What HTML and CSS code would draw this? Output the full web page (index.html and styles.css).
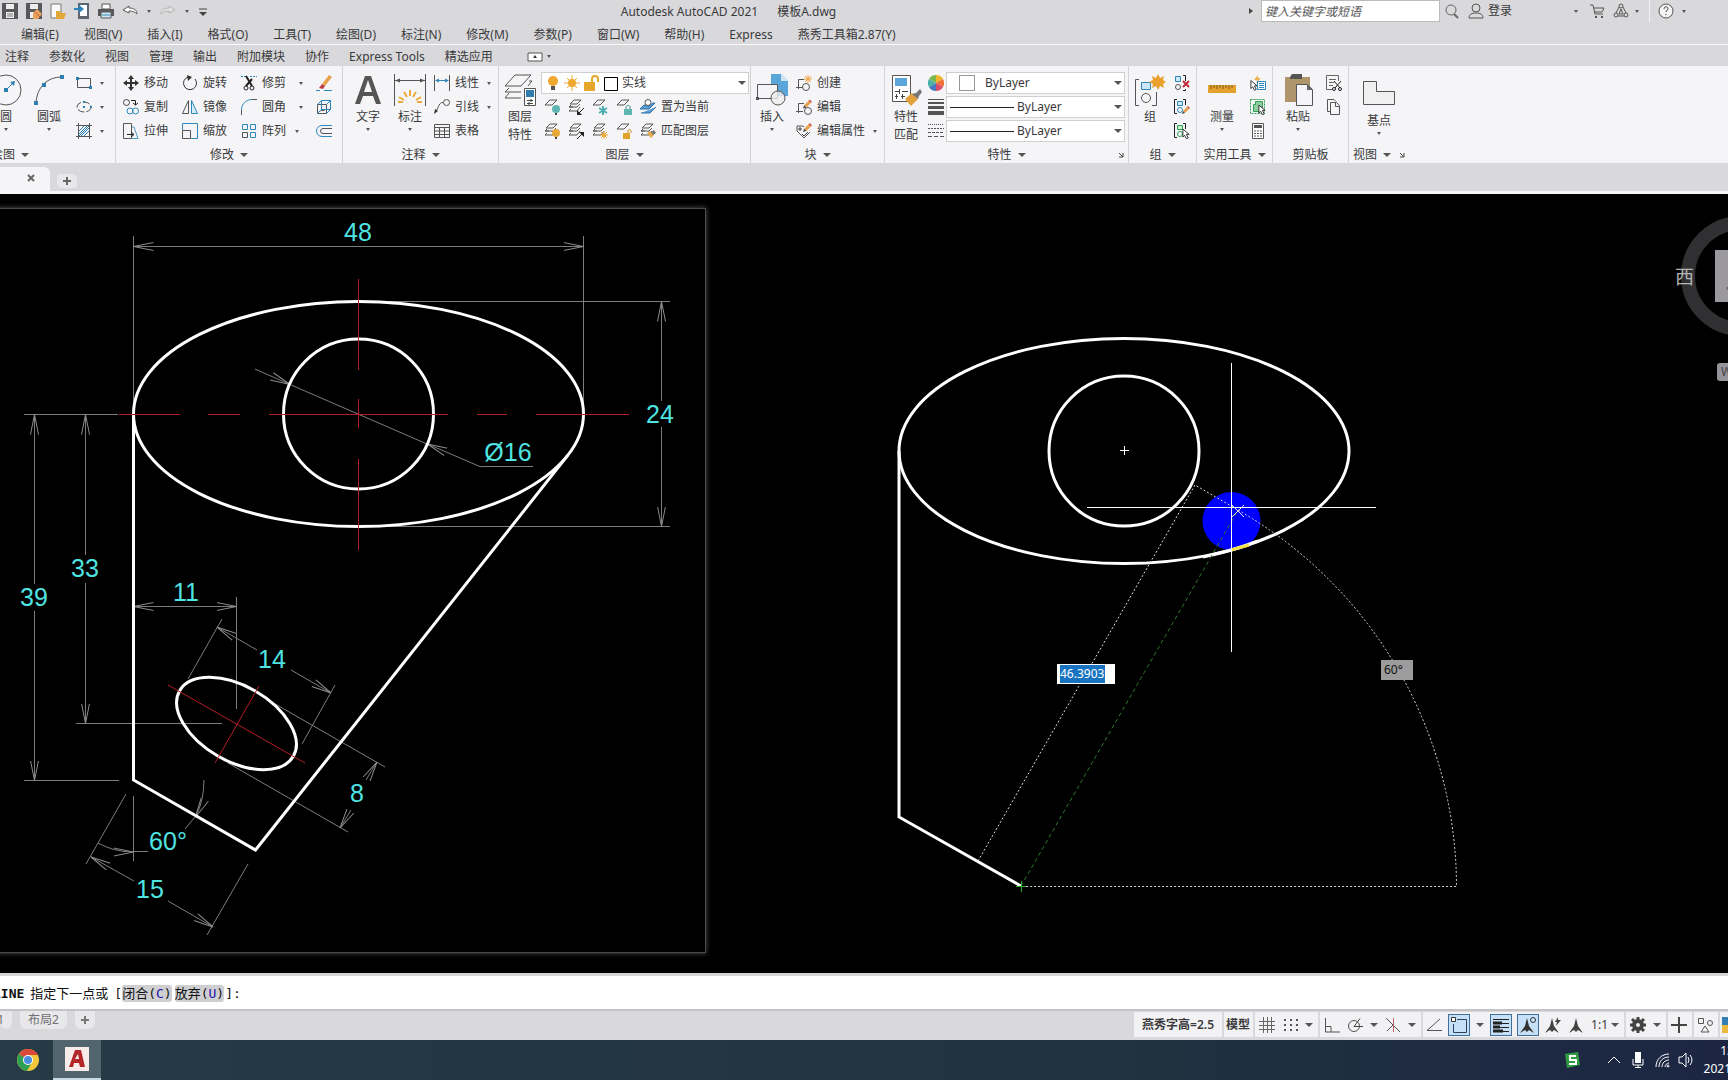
FILE: index.html
```html
<!DOCTYPE html>
<html lang="zh-CN">
<head>
<meta charset="utf-8">
<title>Autodesk AutoCAD 2021 模板A.dwg</title>
<link rel="stylesheet" href="styles.css">
</head>
<body>
<svg class="sprite" aria-hidden="true">
  <symbol id="layer1" viewBox="0 0 16 16"><path d="M1 6L6 1h7L8 6z" fill="none" stroke="#555"/></symbol>
  <symbol id="layers" viewBox="0 0 16 16"><path d="M2 5L6 1h7L9 5zM5 8H1l2-2M1 8h8l3-3M3 10l-2 2h8l3-4" fill="none" stroke="#555"/></symbol>
  <symbol id="pencil" viewBox="0 0 8 8"><path d="M1 5l4-4 2 2-4 4z" fill="#e9a04b"/><path d="M5 1l1-1 2 2-1 1z" fill="#c8553d"/><path d="M1 5L0 8l3-1z" fill="#444"/></symbol>
  <symbol id="cursor" viewBox="0 0 9 12"><path d="M1 1v9l2-2 2 4 2-1-2-4h3z" fill="#fff" stroke="#222"/></symbol>
</svg>

<header class="titlebar">
  <div class="qat">
    <button aria-label="保存"><svg viewBox="0 0 16 16"><path d="M0 0h16v16H0z" fill="#58585a"/><path d="M4 1h8v5H4zM4 9h8v6H4z" fill="#eee"/><path d="M5 11h6M5 13h6" stroke="#777"/></svg></button>
    <button aria-label="另存为"><svg viewBox="0 0 16 16"><path d="M0 0h16v16H0z" fill="#58585a"/><path d="M4 1h8v5H4zM4 9h8v6H4z" fill="#eee"/><path d="M7 10l4-4 5 5-4 5H7z" fill="#e7a35c"/><path d="M9 9l5 5" stroke="#c65b3a"/></svg></button>
    <button aria-label="打开"><svg viewBox="0 0 16 16"><path d="M1 1h10v14H1z" fill="#fafafa" stroke="#777"/><path d="M6 8h4l1 2h5l-2 6H6z" fill="#e3a83a"/></svg></button>
    <button aria-label="从移动设备打开"><svg viewBox="0 0 16 16"><path d="M4 0h11v16H4z" fill="#5b6670"/><path d="M6 2h7v11H6z" fill="#fff"/><path d="M0 5h5V2l5 4-5 4V7H0z" fill="#2e84bd"/></svg></button>
    <button aria-label="打印"><svg viewBox="0 0 16 16"><path d="M4 1h8v5H4z" fill="#fff" stroke="#555"/><path d="M0 6h16v7H0z" fill="#58585a"/><path d="M3 9h10v6H3z" fill="#cfe6f3" stroke="#58585a"/><path d="M4 12h8" stroke="#3a87b5"/></svg></button>
    <button aria-label="放弃"><svg viewBox="0 0 16 16"><path d="M1 7l6-4v2c5 0 8 2 8 6-2-2-4-3-8-3v2z" fill="#fff" stroke="#555"/></svg></button>
    <i class="caret"></i>
    <button aria-label="重做"><svg viewBox="0 0 16 16"><path d="M15 7L9 3v2c-5 0-8 2-8 6 2-2 4-3 8-3v2z" fill="#e4e4e4" stroke="#b4b4b4"/></svg></button>
    <i class="caret"></i>
    <button class="slim" aria-label="自定义"><svg viewBox="0 0 10 16"><path d="M1 6h8" stroke="#444"/><path d="M1 9h8l-4 4z" fill="#444"/></svg></button>
  </div>
  <div class="apptitle"><span>Autodesk AutoCAD 2021</span><span>模板A.dwg</span></div>
  <div class="infocenter">
    <i class="caret right"></i>
    <input class="search" type="text" placeholder="键入关键字或短语" aria-label="搜索">
    <button aria-label="搜索"><svg viewBox="0 0 16 16"><circle cx="7" cy="7" r="5" fill="none" stroke="#666"/><path d="M10 11l4 4" stroke="#666" stroke-width="2"/></svg></button>
    <button class="login"><svg viewBox="0 0 16 16"><circle cx="8" cy="5" r="4" fill="none" stroke="#555"/><path d="M1 15c0-4 3-5 7-5s7 1 7 5z" fill="none" stroke="#555"/></svg>登录</button>
    <i class="caret wide"></i>
    <button aria-label="应用商店"><svg viewBox="0 0 16 16"><path d="M1 2h3l2 9h8M5 5h10l-2 4H5" fill="none" stroke="#555"/><path d="M6 14h2M12 14h2" stroke="#555" stroke-width="2"/></svg></button>
    <button aria-label="Autodesk"><svg viewBox="0 0 16 16" fill="none" stroke="#555"><circle cx="8" cy="3" r="2"/><circle cx="3" cy="12" r="2"/><circle cx="13" cy="12" r="2"/><path d="M6 4L3 10M10 4l3 6M5 13h6M8 6l-2 5h4z"/></svg></button>
    <i class="caret near"></i>
    <span class="vsep"></span>
    <button aria-label="帮助"><svg viewBox="0 0 16 16"><circle cx="8" cy="8" r="7" fill="#f4f4f4" stroke="#555"/><path d="M6 6c0-3 4-3 4 0 0 1-2 1-2 3M8 11v1" fill="none" stroke="#444"/></svg></button>
    <i class="caret"></i>
  </div>
</header>

<nav class="menubar">
  <a href="#">编辑(E)</a><a href="#">视图(V)</a><a href="#">插入(I)</a><a href="#">格式(O)</a><a href="#">工具(T)</a><a href="#">绘图(D)</a><a href="#">标注(N)</a><a href="#">修改(M)</a><a href="#">参数(P)</a><a href="#">窗口(W)</a><a href="#">帮助(H)</a><a href="#">Express</a><a href="#">燕秀工具箱2.87(Y)</a>
</nav>
<nav class="tabs">
  <a href="#">注释</a><a href="#">参数化</a><a href="#">视图</a><a href="#">管理</a><a href="#">输出</a><a href="#">附加模块</a><a href="#">协作</a><a href="#">Express Tools</a><a href="#">精选应用</a>
  <button class="minimize" aria-label="最小化功能区"><svg viewBox="0 0 16 10"><path d="M1 1h14v8H1z" fill="#fff" stroke="#555"/><path d="M6 6h4L8 3z" fill="#333"/></svg><i class="caret"></i></button>
</nav>

<main class="ribbon">
  <section class="panel draw">
    <div class="body">
      <button class="big"><svg viewBox="0 0 32 32"><circle cx="16" cy="16" r="15" fill="none" stroke="#555"/><path d="M16 16l7-7" stroke="#2e7fb0"/><path d="M25 7l-1 5-4-4zM14 14h4v4h-4z" fill="#2e7fb0"/></svg>圆<i class="caret"></i></button>
      <button class="big"><svg viewBox="0 0 32 32"><path d="M3 29C4 14 13 3 29 3" fill="none" stroke="#555"/><path d="M1 27h4v4H1zM9 9h4v4H9zM27 1h4v4h-4z" fill="#2e7fb0"/></svg>圆弧<i class="caret"></i></button>
      <div class="stack">
        <button class="sm" aria-label="矩形"><svg viewBox="0 0 16 16"><path d="M1.500 3.500h13v9h-13z" fill="none" stroke="#555"/><path d="M0 2h3v3H0zM13 11h3v3h-3z" fill="#2e7fb0"/></svg><i class="caret"></i></button>
        <button class="sm" aria-label="椭圆"><svg viewBox="0 0 16 16"><ellipse cx="8" cy="8" rx="7" ry="5" fill="none" stroke="#555" stroke-dasharray="7 2"/><path d="M7 7h2v2H7zM7 2h2v2H7zM14 7h2v2h-2z" fill="#2e7fb0"/></svg><i class="caret"></i></button>
        <button class="sm" aria-label="图案填充"><svg viewBox="0 0 16 16"><path d="M2.500 0v16M13.500 0v16M0 2.500h16M0 13.500h16" stroke="#555"/><path d="M3 8l5-5M3 13L13 3M8 13l5-5M3 11l8-8M5 13l8-8" stroke="#2e7fb0"/></svg><i class="caret"></i></button>
      </div>
    </div>
    <button class="ptitle">绘图<i class="caret l"></i></button>
  </section>

  <section class="panel modify">
    <div class="body">
      <div class="stack c59">
        <button class="sm"><svg viewBox="0 0 16 16"><path d="M8 2v12M2 8h12" stroke="#333" stroke-width="2"/><path d="M8 0l3 4H5zM8 16l3-4H5zM0 8l4-3v6zM16 8l-4-3v6z" fill="#333"/></svg>移动</button>
        <button class="sm"><svg viewBox="0 0 16 16" fill="none"><circle cx="3.500" cy="3.500" r="3" stroke="#444"/><path d="M8 1.500h4.500V6M10 4l2.500 2L15 4" stroke="#222"/><circle cx="7" cy="12" r="3" stroke="#2e88bd"/><circle cx="12.500" cy="12" r="3" stroke="#2e88bd"/></svg>复制</button>
        <button class="sm"><svg viewBox="0 0 16 16" fill="none"><path d="M.5.500h8v15h-8z" stroke="#555"/><path d="M9 4h2l4 11.500H8" stroke="#4a9cc9"/><path d="M4 11.500h6M8 9l3 2.500L8 14" stroke="#222"/></svg>拉伸</button>
      </div>
      <div class="stack c59">
        <button class="sm"><svg viewBox="0 0 16 16"><path d="M13 4A6.500 6.500 0 1 1 6 2" fill="none" stroke="#333"/><path d="M5 0l5 2-4 4z" fill="#333"/></svg>旋转</button>
        <button class="sm"><svg viewBox="0 0 16 16"><path d="M6.500 1.500v13h-6z" fill="none" stroke="#555"/><path d="M9.500 1.500v13h6z" fill="#d7ebf6" stroke="#2e88bd"/></svg>镜像</button>
        <button class="sm"><svg viewBox="0 0 16 16" fill="none"><path d="M.5 7V.500h15v15H9" stroke="#2e88bd"/><path d="M.5 7.500h8v8h-8z" stroke="#555"/></svg>缩放</button>
      </div>
      <div class="stack c75">
        <button class="sm trim"><svg viewBox="0 0 16 16" fill="none"><path d="M0 1.500h5M9 1.500h7" stroke="#2e88bd" stroke-dasharray="2 1"/><path d="M5 1l6 10M11 4l-6 7" stroke="#222" stroke-width="2"/><circle cx="5" cy="13" r="2" stroke="#222"/><circle cx="11" cy="13" r="2" stroke="#222"/></svg>修剪<i class="caret"></i></button>
        <button class="sm trim"><svg viewBox="0 0 16 16" fill="none"><path d="M.5 16v-5M11 .500h5" stroke="#555"/><path d="M.5 11C.5 5 5 .500 11 .500" stroke="#2e88bd"/></svg>圆角<i class="caret"></i></button>
        <button class="sm"><svg viewBox="0 0 16 16" fill="none" stroke="#2e88bd"><path d="M1.500 1.500h5v5h-5zM9.500 1.500h5v5h-5zM9.500 9.500h5v5h-5z"/><path d="M1.500 9.500h5v5h-5z" stroke="#555"/></svg>阵列<i class="caret"></i></button>
      </div>
      <div class="stack">
        <button class="sm" aria-label="删除"><svg viewBox="0 0 16 16"><path d="M6 9l7-9 3 2-7 9z" fill="#e8a34a"/><path d="M6 9l3 2-2 3-4-1z" fill="#bd3e48"/><path d="M0 15.500h4M8 15.500h8" stroke="#2e88bd"/></svg></button>
        <button class="sm" aria-label="分解"><svg viewBox="0 0 16 16" fill="none"><path d="M1.500 5.500h9v9h-9zM5.500 8.500v3h3" stroke="#555"/><path d="M1.500 5.500l4-4h9l-4 4M14.500 1.500v9l-4 4M5.500 2v9l-4 3M5.500 10.500h9" stroke="#2e88bd"/></svg></button>
        <button class="sm" aria-label="偏移"><svg viewBox="0 0 16 16" fill="none"><path d="M16 2.500H6a5 5 0 0 0 0 11h10" stroke="#2e88bd"/><path d="M16 5.500H7a2 2 0 0 0 0 5h9" stroke="#555"/></svg></button>
      </div>
    </div>
    <button class="ptitle">修改<i class="caret l"></i></button>
  </section>

  <section class="panel annotate">
    <div class="body">
      <button class="big"><svg viewBox="0 0 32 32"><path d="M3 30L13 2h6l10 28h-5l-3-8H11l-3 8zM12 18h8L16 6z" fill="#555" fill-rule="evenodd"/></svg>文字<i class="caret"></i></button>
      <button class="big"><svg viewBox="0 0 32 32"><path d="M.5 0v32M31.500 0v32M1 6.500h30" stroke="#555"/><path d="M1 6.500l5-2v4zM31 6.500l-5-2v4z" fill="#555"/><path d="M16 16v6M10 18l3 5M22 18l-3 5M5 23l5 3M27 23l-5 3M4 28h5M23 28h5" stroke="#e9ac3c" stroke-width="2"/></svg>标注<i class="caret"></i></button>
      <div class="stack">
        <button class="sm"><svg viewBox="0 0 16 16"><path d="M.5 0v16M15.500 0v16" stroke="#555"/><path d="M2 5.500h12" stroke="#2e88bd"/><path d="M1 5.500l4-2v4zM15 5.500l-4-2v4z" fill="#2e88bd"/></svg>线性<i class="caret"></i></button>
        <button class="sm"><svg viewBox="0 0 16 16"><circle cx="12.500" cy="3.500" r="3" fill="none" stroke="#555"/><path d="M9 3.500c-4 0-4 4-7 9" fill="none" stroke="#555"/><path d="M0 15l1-5 3 2z" fill="#333"/></svg>引线<i class="caret"></i></button>
        <button class="sm"><svg viewBox="0 0 16 16" fill="none" stroke="#555"><path d="M.5 1.500h15v13H.5zM0 4.500h16M0 8h16M0 11.500h16M5.500 5v10M10.500 5v10"/></svg>表格</button>
      </div>
    </div>
    <button class="ptitle">注释<i class="caret l"></i></button>
  </section>

  <section class="panel layer">
    <div class="body">
      <button class="big"><svg viewBox="0 0 32 32"><path d="M1 12L11 1h16L17 12zM5 14l-4 4h16M25 7h3l-4 5M1 24h16M5 19l-4 5" fill="none" stroke="#555"/><path d="M20.500 14.500h11v17h-11z" fill="#fff" stroke="#555"/><path d="M22 16h8v7h-8z" fill="#2e7fb0"/><path d="M23 26.500h6M23 29.500h6M27 25v3M25 28v3" stroke="#444"/></svg>图层<br>特性</button>
      <div class="rows">
        <div class="combo">
          <svg viewBox="0 0 16 16"><circle cx="8" cy="6" r="5" fill="#f0a830"/><path d="M6 11h4v4H6z" fill="#555"/></svg>
          <svg viewBox="0 0 16 16"><circle cx="8" cy="8" r="4" fill="#f0a830"/><path d="M8 0v16M0 8h16M3 3l10 10M13 3L3 13" stroke="#f0a830"/></svg>
          <svg viewBox="0 0 16 16"><path d="M1 7h11v9H1z" fill="#e5a82c"/><path d="M9 7V4c0-4 6-4 6 0v3" fill="none" stroke="#e5a82c" stroke-width="2"/></svg>
          <svg viewBox="0 0 16 16"><path d="M2.500 2.500h13v13h-13z" fill="#fff" stroke="#000"/></svg>
          <select aria-label="图层"><option>实线</option></select><i class="caret l"></i>
        </div>
        <div class="irow">
          <button class="sm" aria-label="关"><svg viewBox="0 0 16 16"><use href="#layer1" width="16" height="16"/><circle cx="12" cy="10" r="4" fill="#5fb5b2"/><path d="M11 14h2v2h-2z" fill="#444"/></svg></button>
          <button class="sm" aria-label="隔离"><svg viewBox="0 0 16 16"><use href="#layers" width="16" height="16"/><path d="M16 9l-5 5" stroke="#222"/><path d="M9 16v-5l5 5z" fill="#222"/></svg></button>
          <button class="sm" aria-label="冻结"><svg viewBox="0 0 16 16"><use href="#layer1" width="16" height="16"/><path d="M11 7v9M7 9l8 5M15 9l-8 5" stroke="#4caeb0" stroke-width="2"/></svg></button>
          <button class="sm" aria-label="锁定"><svg viewBox="0 0 16 16"><use href="#layer1" width="16" height="16"/><path d="M8 10h8v6H8z" fill="#5fb5b2"/><path d="M10 10V8c0-2 4-2 4 0v2" fill="none" stroke="#3b8f8d"/></svg></button>
          <button class="sm"><svg viewBox="0 0 16 16"><path d="M4 6L0 10h9l6-6h-2l-4 3zM1 14h9l6-6" fill="#5b9fd4" stroke="#2e6fa8"/><circle cx="8" cy="3.500" r="3" fill="#fff" stroke="#555"/></svg>置为当前</button>
        </div>
        <div class="irow">
          <button class="sm" aria-label="打开所有图层"><svg viewBox="0 0 16 16"><use href="#layers" width="16" height="16"/><circle cx="12" cy="10" r="4" fill="#e9a93a"/><path d="M11 14h2v2h-2z" fill="#444"/></svg></button>
          <button class="sm" aria-label="取消隔离"><svg viewBox="0 0 16 16"><use href="#layers" width="16" height="16"/><path d="M9 16l5-5" stroke="#222"/><path d="M16 9v5l-5-5z" fill="#222"/></svg></button>
          <button class="sm" aria-label="解冻所有图层"><svg viewBox="0 0 16 16"><use href="#layers" width="16" height="16"/><circle cx="12" cy="12" r="2" fill="#e9a93a"/><path d="M12 8v8M8 12h8M9 9l6 6M15 9l-6 6" stroke="#e9a93a"/></svg></button>
          <button class="sm" aria-label="解锁"><svg viewBox="0 0 16 16"><use href="#layer1" width="16" height="16"/><path d="M7 10h7v6H7z" fill="#e0a02c"/><path d="M12 10V8c0-2 3-2 3 0v2" fill="none" stroke="#c98d20"/></svg></button>
          <button class="sm"><svg viewBox="0 0 16 16"><use href="#layers" width="16" height="16"/><path d="M7 10l4 5 3-3-4-4z" fill="#e4a94c"/><path d="M11 9l3-2 2 3-3 2z" fill="#777"/></svg>匹配图层</button>
        </div>
      </div>
    </div>
    <button class="ptitle">图层<i class="caret l"></i></button>
  </section>

  <section class="panel block">
    <div class="body">
      <button class="big"><svg viewBox="0 0 32 32"><path d="M15 0h10l7 7v15H15z" fill="#5aa6d8"/><path d="M25 0v7h7z" fill="#cfe6f5"/><path d="M1.500 10.500h20v14h-20z" fill="#f5f5f7" stroke="#555"/><circle cx="22" cy="24" r="7" fill="#eee" fill-opacity=".8" stroke="#555"/><path d="M0 23h3v3H0z" fill="#555"/></svg>插入<i class="caret"></i></button>
      <div class="stack">
        <button class="sm"><svg viewBox="0 0 16 16"><path d="M2.500 14V4.500H8M0 12.500h7" fill="none" stroke="#555"/><circle cx="10" cy="12" r="3.500" fill="none" stroke="#555"/><path d="M12 0v8M8 4h8M9 1l6 6M15 1L9 7" stroke="#e9a23a"/></svg>创建</button>
        <button class="sm"><svg viewBox="0 0 16 16"><path d="M2.500 14V4.500H8M0 12.500h7" fill="none" stroke="#555"/><circle cx="12" cy="12" r="3.500" fill="none" stroke="#555"/><use href="#pencil" x="7" y="0" width="9" height="10"/></svg>编辑</button>
        <button class="sm"><svg viewBox="0 0 16 16"><path d="M1 3h6l1 1M1 3v5l7 7 6-6" fill="none" stroke="#555"/><path d="M3 5h2v2H3zM6 11l2 2 4-4" fill="none" stroke="#444"/><use href="#pencil" x="7" y="0" width="9" height="9"/></svg>编辑属性<i class="caret"></i></button>
      </div>
    </div>
    <button class="ptitle">块<i class="caret l"></i></button>
  </section>

  <section class="panel props">
    <div class="body">
      <button class="big"><svg viewBox="0 0 32 32"><path d="M2.500 1.500h18v26h-18z" fill="#fff" stroke="#555"/><path d="M5 4h12v8H5z" fill="#5aa6d8"/><path d="M5 17.500h4M12 17.500h6M9.500 15v5M5 22.500h3M11 22.500h4M12.500 20v5M6.500 20v5" stroke="#444"/><path d="M15 25l7-6 6 6-7 7z" fill="#e3a13b"/><path d="M22 20l4-1 4-4 2 3-3 4-1 3z" fill="#777"/></svg>特性<br>匹配</button>
      <div class="rows">
        <div class="prow"><svg class="ic" viewBox="0 0 16 16"><path d="M8 8V0a8 8 0 0 1 7 4z" fill="#f0b32c"/><path d="M8 8l7-4a8 8 0 0 1 0 8z" fill="#ef7037"/><path d="M8 8l7 4a8 8 0 0 1-7 4z" fill="#d94b6a"/><path d="M8 8v8a8 8 0 0 1-7-4z" fill="#4579c0"/><path d="M8 8l-7 4a8 8 0 0 1 0-8z" fill="#4ab2a8"/><path d="M8 8L1 4a8 8 0 0 1 7-4z" fill="#79b94f"/></svg>
          <div class="combo color"><span class="swatch"></span><select aria-label="颜色"><option>ByLayer</option></select><i class="caret l"></i></div></div>
        <div class="prow"><svg class="ic" viewBox="0 0 16 16"><path d="M0 .500h16" stroke="#555"/><path d="M0 4h16" stroke="#555" stroke-width="2"/><path d="M0 8.500h16" stroke="#555" stroke-width="3"/><path d="M0 14h16" stroke="#555" stroke-width="4"/></svg>
          <div class="combo"><span class="line"></span><select aria-label="线宽"><option>ByLayer</option></select><i class="caret l"></i></div></div>
        <div class="prow"><svg class="ic" viewBox="0 0 16 16" stroke="#555"><path d="M0 1.500h16" stroke-dasharray="1 1"/><path d="M0 5.500h16" stroke-dasharray="2 1"/><path d="M0 9.500h16" stroke-dasharray="3 1"/><path d="M0 13.500h16" stroke-dasharray="4 2"/></svg>
          <div class="combo"><span class="line"></span><select aria-label="线型"><option>ByLayer</option></select><i class="caret l"></i></div></div>
      </div>
    </div>
    <button class="ptitle">特性<i class="caret l"></i></button>
    <button class="launcher" aria-label="特性设置"><svg viewBox="0 0 6 6"><path d="M1 1l4 4M5 1v4H1" fill="none" stroke="#444"/></svg></button>
  </section>

  <section class="panel group">
    <div class="body">
      <button class="big"><svg viewBox="0 0 32 32"><path d="M5 5.500H1.500v26H5M18 31.500h4.500V18" fill="none" stroke="#555"/><path d="M7.500 8.500h9v7h-9z" fill="#cfe6f5" stroke="#2e88bd"/><circle cx="12" cy="24" r="4.500" fill="none" stroke="#555"/><path d="M24 0l2 4 4-2-1 4 3 2-3 2 1 4-4-2-2 4-2-4-4 2 1-4-4-2 4-2-1-4 4 2z" fill="#e9a02c"/></svg>组</button>
      <div class="stack">
        <button class="sm" aria-label="解除编组"><svg viewBox="0 0 16 16"><path d="M1.500 1.500h5v5h-5z" fill="#cfe6f5" stroke="#2e88bd"/><circle cx="4" cy="12" r="2.500" fill="none" stroke="#555"/><path d="M9 .500h2.500V6M9 15.500h2.500V14" fill="none" stroke="#222"/><path d="M9 6l6 6M15 6l-6 6" stroke="#c0283a" stroke-width="2"/></svg></button>
        <button class="sm" aria-label="组编辑"><svg viewBox="0 0 16 16"><path d="M3 .500H.5v14H3M9 .500h2.500V6" fill="none" stroke="#222"/><path d="M3.500 2.500h5v4h-5z" fill="#cfe6f5" stroke="#2e88bd"/><circle cx="6" cy="11" r="2.500" fill="none" stroke="#2e88bd"/><use href="#pencil" x="8" y="7" width="8" height="8"/></svg></button>
        <button class="sm" aria-label="组选择"><svg viewBox="0 0 16 16"><path d="M3 .500H.5v14H3M9 .500h2.500V6" fill="none" stroke="#222"/><path d="M3.500 2.500h5v4h-5z" fill="#c9ecd1" stroke="#2f9e4f"/><circle cx="6" cy="11" r="2.500" fill="none" stroke="#2f9e4f"/><use href="#cursor" x="8" y="5" width="8" height="11"/></svg></button>
      </div>
    </div>
    <button class="ptitle">组<i class="caret l"></i></button>
  </section>

  <section class="panel utils">
    <div class="body">
      <button class="big"><svg viewBox="0 0 32 32"><path d="M2 11h28v8H2z" fill="#e3a22c"/><path d="M5 11v4M8 11v3M11 11v4M14 11v3M17 11v4M20 11v3M23 11v4M26 11v3" stroke="#7a5a1c"/></svg>测量<i class="caret"></i></button>
      <div class="stack">
        <button class="sm" aria-label="快速选择"><svg viewBox="0 0 16 16"><use href="#cursor" x="0" y="4" width="8" height="12"/><path d="M8 0L4 5h3L6 8l5-5H8z" fill="#eeb24a"/><path d="M7.500 6.500h8v8h-8z" fill="#fff" stroke="#2e88bd"/><path d="M9 8.500h5M9 10.500h5M9 12.500h5" stroke="#2e88bd"/></svg></button>
        <button class="sm" aria-label="全部选择"><svg viewBox="0 0 16 16"><path d="M.5.500h14v14H.5z" fill="none" stroke="#2f9e4f" stroke-dasharray="2 1"/><path d="M5.500 2.500h7v7h-3v3h-6v-7h2z" fill="#8fd0a0" stroke="#2f9e4f"/><use href="#cursor" x="8" y="5" width="8" height="11"/></svg></button>
        <button class="sm" aria-label="计算器"><svg viewBox="0 0 16 16"><path d="M2.500.500h11v15h-11z" fill="#fff" stroke="#555"/><path d="M4 2h8v3H4z" fill="#555"/><path d="M4 8h8M4 10.500h8M4 13h8" stroke="#555" stroke-dasharray="2 1" stroke-width="1"/></svg></button>
      </div>
    </div>
    <button class="ptitle">实用工具<i class="caret l"></i></button>
  </section>

  <section class="panel clip">
    <div class="body">
      <button class="big"><svg viewBox="0 0 32 32"><path d="M3 3h25v25H3z" fill="#b0946c"/><path d="M10 0h10v5H8V3z" fill="#555"/><path d="M14.500 10.500h11l5 5v16h-16z" fill="#f5f5f7" stroke="#555"/><path d="M25 10v6h6z" fill="#666"/></svg>粘贴<i class="caret"></i></button>
      <div class="stack">
        <button class="sm" aria-label="剪切"><svg viewBox="0 0 16 16" fill="none"><path d="M12.500 6V.500H.5v14H7M3 4.500h7M3 7.500h5M3 10.500h4" stroke="#666"/><path d="M8 6l6 7M15 6l-6 7" stroke="#222"/><circle cx="8" cy="14" r="1.500" stroke="#222"/><circle cx="14" cy="14" r="1.500" stroke="#222"/></svg></button>
        <button class="sm" aria-label="复制剪裁"><svg viewBox="0 0 16 16" fill="none" stroke="#555"><path d="M4 12.500H1.500V.500H8l2 2M4.500 3.500h6l3 3v9h-9zM9.500 4v3.500H13"/></svg></button>
      </div>
    </div>
    <button class="ptitle">剪贴板</button>
  </section>

  <section class="panel view">
    <div class="body">
      <button class="big"><svg viewBox="0 0 32 32"><path d="M.5 3.500h13v10h18v13H.5z" fill="#f0f0f0" stroke="#555"/></svg>基点<i class="caret"></i></button>
    </div>
    <button class="ptitle">视图<i class="caret l"></i></button>
    <button class="launcher" aria-label="视图设置"><svg viewBox="0 0 6 6"><path d="M1 1l4 4M5 1v4H1" fill="none" stroke="#444"/></svg></button>
  </section>
</main>

<div class="doctabs">
  <div class="doctab"><button aria-label="关闭"><svg viewBox="0 0 8 8"><path d="M1 1l6 6M7 1L1 7" stroke="#666" stroke-width="2"/></svg></button></div>
  <button class="newtab" aria-label="新图形"><svg viewBox="0 0 8 8"><path d="M4 0v8M0 4h8" stroke="#666" stroke-width="2"/></svg></button>
</div>

<div class="canvas">
  <div class="sheet"></div>
  <svg class="drawing" aria-label="图形">
    <defs>
      <marker id="arr" markerUnits="userSpaceOnUse" markerWidth="22" markerHeight="10" refX="20" refY="5" orient="auto-start-reverse"><path d="M20 5L0 1M20 5L0 9" fill="none" stroke="#8c8c8c"/></marker>
    </defs>
    <g transform="translate(0 -195)" fill="none">
      <g stroke="#7d7d7d">
        <path d="M133.500 237V415M583.500 237V415M373 302.500H670M373 527.500H670M24 415.500H118M24 781.500H119M76 724.500H222M236.500 598V710M133.500 598V620M133.500 797V862"/>
        <path d="M222 620L188 680M335 686L302 745M263 698L385 768M228 764L348 833M126 795L86 865M248 865L207 936"/>
        <g marker-start="url(#arr)" marker-end="url(#arr)">
          <path d="M133.500 247.500H583.500"/><path d="M133.500 607.500H236.500"/>
        </g>
        <g marker-start="url(#arr)">
          <path d="M661.500 302.500V402"/><path d="M661.500 527.500V428"/><path d="M34.500 415.500V585"/><path d="M34.500 781.500V612"/><path d="M85.500 415.500V556"/><path d="M85.500 724.500V584"/>
          <path d="M217 628L257 651"/><path d="M331 694L291 671"/><path d="M377 763L366 781"/><path d="M340 829L351 811"/><path d="M91 858L134 882"/><path d="M213 928L168 902"/>
          <path d="M427.500 445L481 468"/><path d="M133.500 853Q114 853 98 844"/><path d="M195.500 818Q204 802 204 781"/>
        </g>
        <path d="M255 370L290 385.500" marker-end="url(#arr)"/>
        <path d="M290 385.500L427 445M481 467.500H533M195 818L185 830M133 852.500H148"/>
      </g>
      <g stroke="#fff" stroke-width="3">
        <ellipse cx="358.500" cy="415" rx="225" ry="112.500"/><circle cx="358.500" cy="415" r="75"/>
        <path d="M133.500 415V781L255.500 851L567.700 456.400"/>
        <ellipse cx="236.500" cy="724.500" rx="65.600" ry="37.500" transform="rotate(30 236.500 724.500)"/>
      </g>
      <path d="M119 415.500H180M208 415.500H240M269 415.500H448M477 415.500H507M536 415.500H629M358.500 280V371M358.500 400V429M358.500 460V551M168 686L305 764M259 687L215 764" stroke="#b41e23"/>
      <g fill="#4fe3e1" class="dims">
        <text x="358" y="242">48</text><text x="660" y="424">24</text><text x="508" y="462">Ø16</text><text x="34" y="607">39</text><text x="85" y="578">33</text><text x="186" y="602">11</text><text x="272" y="669">14</text><text x="357" y="803">8</text><text x="168" y="851">60°</text><text x="150" y="899">15</text>
      </g>
    </g>
    <g transform="translate(0 -194)" fill="none">
      <g stroke="#fff" stroke-width="3">
        <ellipse cx="1124" cy="451" rx="225" ry="112.500"/><circle cx="1124" cy="451" r="75"/>
        <path d="M899 451V817L1021 886"/>
      </g>
      <circle cx="1231.500" cy="521" r="29" fill="#00f"/>
      <path d="M1203 557Q1232 551 1258 541" stroke="#fff" stroke-width="3"/>
      <path d="M1231 550L1249 545" stroke="#f3e34a" stroke-width="3"/>
      <path d="M1021 886L1238 510" stroke="#2c7a2c" stroke-dasharray="4 3"/>
      <path d="M978 861L1195 485L1238 510A435 435 0 0 1 1456.500 886.500H1021" stroke="#d8d8d8" stroke-dasharray="2 2"/>
      <path d="M1016 886.500h10M1021.500 881v11" stroke="#2fa52f"/>
      <path d="M1087 507.500H1376M1231.500 363V652M1120 450.500h9M1124.500 446v9" stroke="#fff"/>
      <path d="M1232 505l12 12M1244 505l-12 12" stroke="#ddd"/>
    </g>
  </svg>
  <label class="dyn length"><input type="text" value="46.3903" aria-label="长度"></label>
  <span class="dyn angle">60°</span>
  <div class="viewcube"><span class="ring"></span><span class="west">西</span><span class="face">上</span><button class="wcs">WCS</button></div>
</div>

<div class="command"><b>LINE</b><span>指定下一点或</span><span class="opts">[<button>闭合(<em>C</em>)</button><button>放弃(<em>U</em>)</button>]:</span></div>

<div class="statusbar">
  <div class="layouts"><button class="first">1</button><button>布局2</button><button class="add" aria-label="新布局"><svg viewBox="0 0 8 8"><path d="M4 0v8M0 4h8" stroke="#777" stroke-width="2"/></svg></button></div>
  <div class="status">
    <button class="cell txt height">燕秀字高=2.5</button>
    <button class="cell txt model">模型</button>
    <div class="cell">
      <button aria-label="栅格"><svg viewBox="0 0 16 16"><path d="M4.500 0v16M8.500 0v16M12.500 0v16M0 4.500h16M0 8.500h16M0 12.500h16" stroke="#666"/></svg></button>
      <button aria-label="捕捉"><svg viewBox="0 0 16 16"><path d="M2 3h14M2 8h14M2 13h14" stroke="#555" stroke-width="2" stroke-dasharray="2 4"/></svg></button><i class="caret l"></i>
    </div>
    <div class="cell">
      <button aria-label="正交"><svg viewBox="0 0 16 16"><path d="M1.500 1v14H16M1 9.500h6V15" fill="none" stroke="#555"/></svg></button>
      <button aria-label="极轴"><svg viewBox="0 0 16 16"><circle cx="7" cy="9" r="5.500" fill="none" stroke="#555"/><path d="M7 9.500l6-8M7 9.500h9" stroke="#444"/></svg></button><i class="caret l"></i>
      <button aria-label="等轴测"><svg viewBox="0 0 16 16"><path d="M1 1l14 14M8 8L2 14" stroke="#555"/><path d="M8.500 1v14" stroke="#b66"/></svg></button><i class="caret l"></i>
    </div>
    <div class="cell tight">
      <button aria-label="对象捕捉追踪"><svg viewBox="0 0 16 16"><path d="M14 2L1 13.500h15" fill="none" stroke="#555"/></svg></button>
      <button class="on" aria-label="对象捕捉"><svg viewBox="0 0 16 16"><path d="M6 2.500h9.500v13h-13V7" fill="none" stroke="#27425f"/><path d="M.5.500h4v4h-4z" fill="#fff" stroke="#333"/></svg></button><i class="caret l"></i>
      <button class="on" aria-label="线宽"><svg viewBox="0 0 16 16"><path d="M0 2.500h16M0 6.500h16M0 10.500h16M0 14.500h16" stroke="#222"/><path d="M0 6h9M0 10h7M0 14h10" stroke="#222" stroke-width="3"/></svg></button>
      <button class="on" aria-label="注释可见性"><svg viewBox="0 0 16 16"><path d="M7 1l2 8 5 7-5-3-2 2-2-2-5 3 5-7z" fill="#333"/><circle cx="13" cy="3" r="2.500" fill="none" stroke="#333"/></svg></button>
      <button aria-label="自动缩放"><svg viewBox="0 0 16 16"><path d="M7 1l2 8 5 7-5-3-2 2-2-2-5 3 5-7z" fill="#444"/><path d="M13 0l-3 5h2l-1 4 5-6h-3z" fill="#444"/></svg></button>
      <button aria-label="注释比例"><svg viewBox="0 0 16 16"><path d="M8 1l2 8 5 7-5-3-2 2-2-2-5 3 5-7z" fill="#444"/></svg></button>
      <button class="scale">1:1<i class="caret l"></i></button>
    </div>
    <div class="cell"><button aria-label="工作空间"><svg viewBox="0 0 16 16"><circle cx="8" cy="8" r="4" fill="none" stroke="#444" stroke-width="4"/><path d="M8 0v4M8 12v4M0 8h4M12 8h4M2 2l3 3M11 11l3 3M14 2l-3 3M5 11l-3 3" stroke="#444" stroke-width="3"/></svg></button><i class="caret l"></i></div>
    <div class="cell plus"><button aria-label="注释监视器"><svg viewBox="0 0 16 16"><path d="M8 0v16M0 8h16" stroke="#444" stroke-width="2"/></svg></button></div>
    <div class="cell plus"><button aria-label="隔离对象"><svg viewBox="0 0 16 16" fill="none" stroke="#555"><path d="M1.500 1.500h5v5h-5zM8 9l4 6H4z"/><circle cx="13" cy="6" r="2.500"/></svg></button></div>
    <div class="cell last"><button aria-label="硬件加速"><svg viewBox="0 0 16 16"><path d="M0 0h16v8H0z" fill="#357eb5"/><path d="M0 8h16v8H0z" fill="#e8b93c"/></svg></button></div>
  </div>
</div>

<footer class="taskbar">
  <button class="app" aria-label="Chrome"><svg viewBox="0 0 24 24"><circle cx="12" cy="12" r="11" fill="#f4c63c"/><path d="M12 12L3 6a11 11 0 0 1 19 1H12z" fill="#d94a3d"/><path d="M12 12L3 6a11 11 0 0 0 8 17l5-9z" fill="#2f9e55"/><circle cx="12" cy="12" r="5" fill="#fff"/><circle cx="12" cy="12" r="4" fill="#4a8fdf"/></svg></button>
  <button class="app active" aria-label="AutoCAD"><svg viewBox="0 0 24 24"><path d="M0 0h24v24H0z" fill="#f8ecea"/><path d="M4 20L10 3h6l4 17h-5l-1-4H9l-1 4zM10 12h4l-1-5z" fill="#b3262a" fill-rule="evenodd"/></svg></button>
  <div class="tray">
    <button class="ime" aria-label="输入法"><svg viewBox="0 0 16 16"><path d="M1 2l13-2 2 13-13 3z" fill="#2f9a42"/><path d="M12 4H6v4h6v4H5" fill="none" stroke="#fff" stroke-width="2"/></svg></button>
    <button aria-label="显示隐藏的图标"><svg viewBox="0 0 16 16"><path d="M2 11l6-6 6 6" fill="none" stroke="#fff"/></svg></button>
    <button aria-label="麦克风"><svg viewBox="0 0 16 16"><path d="M5 0h6v11H5z" fill="#fff"/><path d="M3 7v6h10V7M8 13v3M5 15.500h6" fill="none" stroke="#fff"/></svg></button>
    <button aria-label="网络"><svg viewBox="0 0 16 16" fill="none" stroke="#fff"><path d="M2 15C2 7 8 2 15 2M5 15c0-6 4-10 10-10M8 15c0-4 3-7 7-7M11 15c0-2 2-4 4-4"/><circle cx="14" cy="14" r="1"/></svg></button>
    <button aria-label="音量"><svg viewBox="0 0 16 16" fill="none" stroke="#fff"><path d="M1 5h3l4-4v14l-4-4H1zM10 5q2 3 0 6M12 3q4 5 0 10"/></svg></button>
    <div class="clock"><span>12:00</span><span>2021/11/12</span></div>
  </div>
</footer>
</body>
</html>
```
FILE: styles.css
```css
* { box-sizing: border-box; }
html, body { height: 100%; }
body {
  margin: 0;
  display: flex;
  flex-direction: column;
  overflow: hidden;
  background: #d9d9db;
  color: #3a3a3c;
  font: 12px/16px "Noto Sans", "Noto Sans CJK SC", sans-serif;
}
button, input, select { font: inherit; color: inherit; border: 0; background: none; padding: 0; margin: 0; }
select { appearance: none; outline: 0; }
button { display: flex; align-items: center; white-space: nowrap; flex: none; }
a { color: inherit; text-decoration: none; white-space: nowrap; }
svg { display: block; width: 16px; height: 16px; flex: none; }
.sprite { position: absolute; width: 0; height: 0; }
.caret { flex: none; width: 0; height: 0; border: 2px solid transparent; border-top: 3px solid #555; border-bottom: 0; }
.caret.l { border-width: 4px; border-top-width: 4px; border-bottom: 0; }
.caret.right { border: 3px solid transparent; border-left: 4px solid #444; border-right: 0; }

.titlebar { display: flex; align-items: center; height: 22px; flex: none; }
.qat { display: flex; align-items: center; gap: 8px; padding-left: 2px; }
.qat .caret { margin: 0 1px; }
.qat .slim svg { width: 10px; }
.apptitle { flex: 1; display: flex; justify-content: center; gap: 19px; padding-top: 2px; white-space: nowrap; }
.infocenter { display: flex; align-items: center; gap: 8px; padding-right: 42px; }
.search { width: 179px; height: 22px; background: #fff; border: 1px solid #bbb; padding: 0 3px; margin-right: -4px; font-style: italic; }
.search::placeholder { color: #555; opacity: 1; }
.login { gap: 4px; margin-right: 54px; }
.wide { margin-right: 3px; }
.near { margin: 0 2px 0 -2px; }
.vsep { width: 1px; height: 22px; background: #f2f2f2; }

.menubar { display: flex; align-items: center; gap: 25px; height: 23px; padding: 3px 0 0 21px; border-bottom: 1px solid #fafafa; flex: none; }
.tabs { display: flex; align-items: center; gap: 20px; height: 21px; padding: 2px 0 0 5px; flex: none; }
.minimize { gap: 4px; margin-left: 14px; }
.minimize svg { height: 10px; }

.ribbon { display: flex; height: 97px; background: #f5f5f7; overflow: hidden; flex: none; }
.panel { position: relative; flex: none; display: flex; flex-direction: column; border-right: 1px solid #d4d4d6; }
.body { display: flex; flex: 1; padding-top: 5px; }
.ptitle { height: 17px; gap: 6px; justify-content: center; }
.launcher { position: absolute; right: 4px; bottom: 5px; }
.launcher svg { width: 6px; height: 6px; }
.big { flex-direction: column; width: 32px; line-height: 18px; padding-top: 3px; align-self: flex-start; }
.big svg { width: 32px; height: 32px; margin-bottom: 2px; }
.big .caret { margin-top: 2px; }
.stack, .rows { display: flex; flex-direction: column; flex: none; }
.sm { height: 24px; gap: 5px; }
.draw { width: 116px; }
.draw .body { justify-content: flex-end; gap: 11px; padding-right: 11px; }
.draw .ptitle { align-self: flex-start; margin-left: -9px; }
.draw .sm { gap: 8px; }
.modify { width: 227px; }
.modify .body { padding-left: 7px; }
.c59 { width: 59px; }
.c75 { width: 75px; }
.c75 .caret { margin-left: 4px; }
.c75 .trim .caret { margin-left: 8px; }
.annotate { width: 156px; }
.annotate .body { padding-left: 9px; gap: 8px; }
.annotate .big:first-child { margin-right: 2px; }
.annotate .sm .caret { margin-left: 3px; }
.layer { width: 252px; }
.layer .body { padding-left: 5px; gap: 5px; }
.layer .irow { display: flex; gap: 8px; padding-left: 3px; }
.combo { display: flex; align-items: center; height: 22px; background: #fff; border: 1px solid #cfcfd1; padding: 0 2px 0 3px; }
.combo select { flex: 1; min-width: 0; }
.layer .combo { width: 208px; gap: 3px; margin: 1px 0; }
.layer .combo select { margin-left: 1px; }
.block { width: 134px; }
.block .body { padding-left: 5px; gap: 8px; }
.block .sm .caret { margin-left: 3px; }
.props { width: 244px; }
.props .body { padding-left: 5px; gap: 6px; }
.prow { display: flex; align-items: center; height: 24px; gap: 2px; }
.props .combo { width: 179px; }
.swatch { width: 16px; height: 16px; border: 1px solid #999; margin: 0 10px 0 9px; }
.line { width: 64px; height: 1px; background: #222; margin-right: 3px; }
.group { width: 68px; }
.group .body { padding-left: 5px; gap: 8px; }
.utils { width: 76px; }
.utils .body { padding-left: 9px; gap: 12px; }
.clip { width: 76px; }
.clip .body { padding-left: 9px; gap: 12px; }
.view { width: 60px; border: 0; }
.view .body { padding: 9px 0 0 14px; }
.view .ptitle { margin-right: 14px; }

.doctabs { display: flex; align-items: flex-end; height: 31px; padding-bottom: 3px; border-bottom: 3px solid #f5f5f7; flex: none; }
.doctab { display: flex; align-items: center; justify-content: flex-end; width: 50px; height: 24px; padding: 0 15px 3px 0; background: #f5f5f7; border-radius: 0 6px 0 0; margin-bottom: -3px; }
.doctab svg, .newtab svg, .add svg { width: 8px; height: 8px; }
.newtab { height: 14px; width: 20px; justify-content: center; background: #e8e8ea; border-radius: 3px 5px; margin-left: 7px; }

.canvas { position: relative; flex: 1; min-height: 0; background: #000; overflow: hidden; }
.sheet { position: absolute; left: -8px; top: 14px; bottom: 20px; width: 714px; border: 1px solid #4a4a4a; box-shadow: 0 0 5px #555; }
.drawing { position: absolute; inset: 0; width: 100%; height: 100%; }
.dims { font-family: "Liberation Sans", Arial, sans-serif; font-size: 25px; text-anchor: middle; }
.dyn { position: absolute; height: 20px; line-height: 20px; }
.length { left: 1057px; top: 470px; width: 58px; background: #fff; padding: 1px 3px; }
.length input { display: block; width: 45px; height: 18px; background: #1874c0; color: #fff; }
.angle { left: 1381px; top: 466px; width: 32px; padding-left: 3px; background: #9c9c9c; color: #111; }
.viewcube { position: absolute; right: 0; top: 20px; width: 60px; height: 170px; overflow: hidden; }
.ring { position: absolute; left: 13px; top: 2px; width: 120px; height: 120px; border: 14px solid #303032; border-radius: 50%; }
.west { position: absolute; left: 7px; top: 50px; font-size: 19px; line-height: 26px; color: #b4b4b4; }
.face { position: absolute; left: 47px; top: 36px; width: 52px; height: 52px; background: #9b999d; color: #666; font-size: 32px; line-height: 52px; text-align: center; }
.wcs { position: absolute; left: 49px; top: 149px; height: 18px; padding: 0 4px; background: #97939b; color: #444; border-radius: 3px; }

.command { display: flex; align-items: center; gap: 6px; height: 38px; padding-top: 2px; flex: none; background: #fff; border-top: 3px solid #d6d6d8; border-bottom: 2px solid #c4c4c6; color: #111; font: 13px/18px "DejaVu Sans Mono", "Noto Sans CJK SC", monospace; white-space: nowrap; }
.command b { margin-left: -7px; }
.opts { display: flex; align-items: center; }
.opts button { background: #cfcfd1; border-radius: 3px; height: 17px; margin-right: 3px; }
.opts button:last-of-type { margin-right: 1px; }
.opts em { font-style: normal; color: #1d12a8; }

.statusbar { display: flex; height: 29px; flex: none; background: #d9d9db; overflow: hidden; }
.layouts { display: flex; gap: 8px; align-self: flex-start; color: #707074; }
.layouts button { height: 18px; padding: 0 8px; background: #e8e8ea; border-radius: 0 0 6px 6px; }
.layouts .first { width: 12px; padding: 0 8px 0 0; justify-content: flex-end; }
.layouts .add { width: 20px; padding: 0 6px; }
.status { display: flex; gap: 2px; margin-left: auto; padding-top: 1px; height: 26px; flex: none; }
.cell { display: flex; align-items: center; gap: 7px; background: #f2f2f4; padding: 0 5px 0 4px; }
.txt { font-weight: 600; padding: 0 5px; }
.height { width: 88px; justify-content: center; }
.model { width: 29px; padding: 0 2px; }
.tight { gap: 7px; padding-left: 3px; }
.on { width: 22px; height: 22px; justify-content: center; background: #c6e0f7; border: 1px solid #3f6d9c; margin: 0 -1px; }
.scale { gap: 3px; }
.plus { padding: 0 5px 0 3px; }
.last { width: 8px; padding: 0 0 0 2px; overflow: hidden; }

.taskbar { display: flex; height: 40px; flex: none; color: #fff; background: linear-gradient(90deg, #253b45, #21333f 60%, #1c2643); overflow: hidden; }
.app { width: 48px; justify-content: center; }
.app:first-child { margin-left: 4px; }
.app.active { margin-left: 1px; }
.app svg { width: 24px; height: 24px; }
.app.active { background: #52646d; border-bottom: 2px solid #c9dbe2; }
.tray { display: flex; align-items: center; gap: 8px; margin-left: auto; }
.ime { margin-right: 18px; }
.clock { width: 67px; margin-right: -41px; display: flex; flex-direction: column; align-items: center; line-height: 18px; white-space: nowrap; }
```
